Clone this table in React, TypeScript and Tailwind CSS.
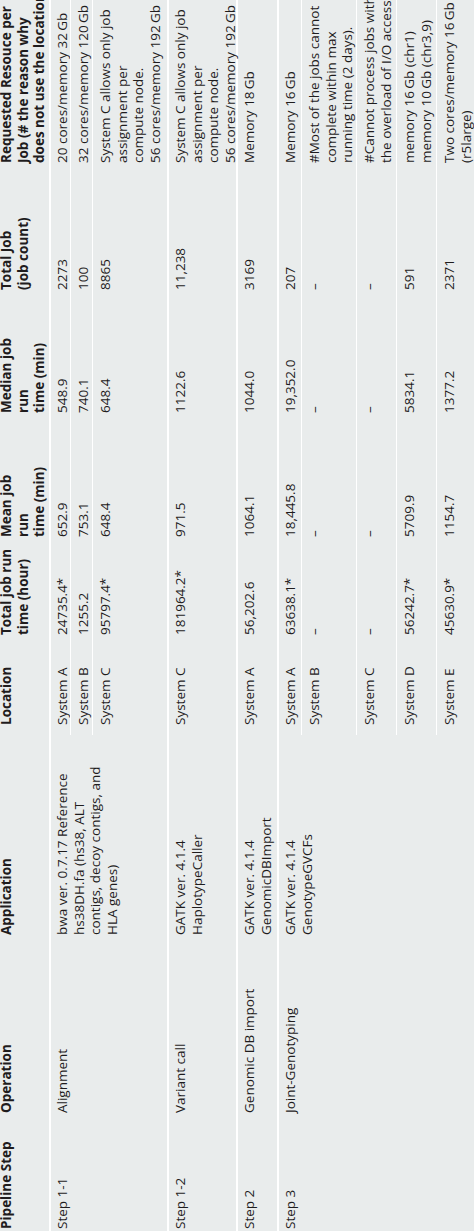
import React from "react";

type Sub = {
  loc: string;
  total: string;
  mean: string;
  median: string;
  count: string;
  req: React.ReactNode;
  cls: string;
};

function SubRow({ s }: { s: Sub }) {
  return (
    <div className={`flex ${s.cls}`}>
      <div className="w-[90px] shrink-0 pl-[10px] whitespace-nowrap">{s.loc}</div>
      <div className="w-[98px] shrink-0 pl-[10px] whitespace-nowrap">{s.total}</div>
      <div className="w-[124px] shrink-0 pl-[10px] whitespace-nowrap">{s.mean}</div>
      <div className="w-[123px] shrink-0 pl-[10px] whitespace-nowrap">{s.median}</div>
      <div className="w-[127px] shrink-0 pl-[10px] whitespace-nowrap">{s.count}</div>
      <div className="flex-1 pl-[10px] whitespace-nowrap">{s.req}</div>
    </div>
  );
}

function Group({
  step,
  op,
  app,
  subs,
  cls,
}: {
  step: string;
  op: string;
  app: React.ReactNode;
  subs: Sub[];
  cls: string;
}) {
  return (
    <div className={`flex border-t-2 border-white ${cls}`}>
      <div className="w-[108px] shrink-0 pl-[2px] pt-[3px] whitespace-nowrap">{step}</div>
      <div className="w-[178px] shrink-0 pl-[10px] pt-[3px] whitespace-nowrap">{op}</div>
      <div className="w-[210px] shrink-0 pl-[10px] pt-[3px] whitespace-nowrap">{app}</div>
      <div className="flex flex-1 flex-col">
        {subs.map((s, i) => (
          <SubRow key={i} s={s} />
        ))}
      </div>
    </div>
  );
}

const T = "\u2009";

export default function App() {
  return (
    <div className="relative h-[1231px] w-[474px] overflow-hidden bg-[#e9ecec]">
      <div className="h-[474px] w-[1231px] origin-top-left -rotate-90 translate-y-[1231px] font-['Open_Sans',sans-serif] text-[13.5px] leading-[16.5px] text-[#1f1c1d]">
        {/* header */}
        <div className="flex h-[49px] font-bold">
          <div className="-mt-[2px] w-[108px] shrink-0 pl-[2px] whitespace-nowrap">Pipeline Step</div>
          <div className="-mt-[2px] w-[178px] shrink-0 pl-[10px] whitespace-nowrap">Operation</div>
          <div className="-mt-[2px] w-[210px] shrink-0 pl-[10px] whitespace-nowrap">Application</div>
          <div className="-mt-[2px] w-[90px] shrink-0 pl-[10px] whitespace-nowrap">Location</div>
          <div className="-mt-[2px] w-[98px] shrink-0 pl-[10px] whitespace-nowrap">
            Total job run
            <br />
            time (hour)
          </div>
          <div className="-mt-[2px] w-[124px] shrink-0 pl-[10px] whitespace-nowrap">
            Mean job
            <br />
            run
            <br />
            time (min)
          </div>
          <div className="-mt-[2px] w-[123px] shrink-0 pl-[10px] whitespace-nowrap">
            Median job
            <br />
            run
            <br />
            time (min)
          </div>
          <div className="-mt-[2px] w-[127px] shrink-0 pl-[10px] whitespace-nowrap">
            Total Job
            <br />
            (job count)
          </div>
          <div className="-mt-[2px] flex-1 pl-[10px] whitespace-nowrap">
            Requested Resouce per
            <br />
            Job (# the reason why
            <br />
            does not use the location)
          </div>
        </div>

        <Group
          step="Step 1-1"
          op="Alignment"
          cls=""
          app={
            <>
              bwa ver. 0.7.17 Reference
              <br />
              hs38DH.fa (hs38, ALT
              <br />
              contigs, decoy contigs, and
              <br />
              HLA genes)
            </>
          }
          subs={[
            {
              loc: "System A",
              total: "24735.4*",
              mean: "652.9",
              median: "548.9",
              count: "2273",
              req: `20 cores/memory 32${T}Gb`,
              cls: "h-[19px] pt-[3px]",
            },
            {
              loc: "System B",
              total: "1255.2",
              mean: "753.1",
              median: "740.1",
              count: "100",
              req: `32 cores/memory 120${T}Gb`,
              cls: "h-[22px] border-t border-white pt-[4px]",
            },
            {
              loc: "System C",
              total: "95797.4*",
              mean: "648.4",
              median: "648.4",
              count: "8865",
              req: (
                <>
                  System C allows only job
                  <br />
                  assignment per
                  <br />
                  compute node.
                  <br />
                  56 cores/memory 192{T}Gb
                </>
              ),
              cls: "h-[75px] border-t border-white pt-[4px]",
            },
          ]}
        />

        <Group
          step="Step 1-2"
          op="Variant call"
          cls="h-[69px]"
          app={
            <>
              GATK ver. 4.1.4
              <br />
              HaplotypeCaller
            </>
          }
          subs={[
            {
              loc: "System C",
              total: "181964.2*",
              mean: "971.5",
              median: "1122.6",
              count: "11,238",
              req: (
                <>
                  System C allows only job
                  <br />
                  assignment per
                  <br />
                  compute node.
                  <br />
                  56 cores/memory 192{T}Gb
                </>
              ),
              cls: "pt-[3px]",
            },
          ]}
        />

        <Group
          step="Step 2"
          op="Genomic DB import"
          cls="h-[41px]"
          app={
            <>
              GATK ver. 4.1.4
              <br />
              GenomicDBImport
            </>
          }
          subs={[
            {
              loc: "System A",
              total: "56,202.6",
              mean: "1064.1",
              median: "1044.0",
              count: "3169",
              req: `Memory 18${T}Gb`,
              cls: "pt-[3px]",
            },
          ]}
        />

        <Group
          step="Step 3"
          op="Joint-Genotyping"
          cls=""
          app={
            <>
              GATK ver. 4.1.4
              <br />
              GenotypeGVCFs
            </>
          }
          subs={[
            {
              loc: "System A",
              total: "63638.1*",
              mean: "18,445.8",
              median: "19,352.0",
              count: "207",
              req: `Memory 16${T}Gb`,
              cls: "h-[22px] pt-[3px]",
            },
            {
              loc: "System B",
              total: "–",
              mean: "–",
              median: "–",
              count: "–",
              req: (
                <>
                  #Most of the jobs cannot
                  <br />
                  complete within max
                  <br />
                  running time (2 days).
                </>
              ),
              cls: "h-[55px] border-t border-white pt-[4px]",
            },
            {
              loc: "System C",
              total: "–",
              mean: "–",
              median: "–",
              count: "–",
              req: (
                <>
                  #Cannot process jobs with
                  <br />
                  the overload of I/O access.
                </>
              ),
              cls: "h-[40px] border-t border-white pt-[4px]",
            },
            {
              loc: "System D",
              total: "56242.7*",
              mean: "5709.9",
              median: "5834.1",
              count: "591",
              req: (
                <>
                  memory 16{T}Gb (chr1)
                  <br />
                  memory 10{T}Gb (chr3,9)
                </>
              ),
              cls: "h-[40px] border-t border-white pt-[4px]",
            },
            {
              loc: "System E",
              total: "45630.9*",
              mean: "1154.7",
              median: "1377.2",
              count: "2371",
              req: (
                <>
                  Two cores/memory 16{T}Gb
                  <br />
                  (r5large)
                </>
              ),
              cls: "h-[40px] border-t border-white pt-[4px]",
            },
          ]}
        />
      </div>
    </div>
  );
}
